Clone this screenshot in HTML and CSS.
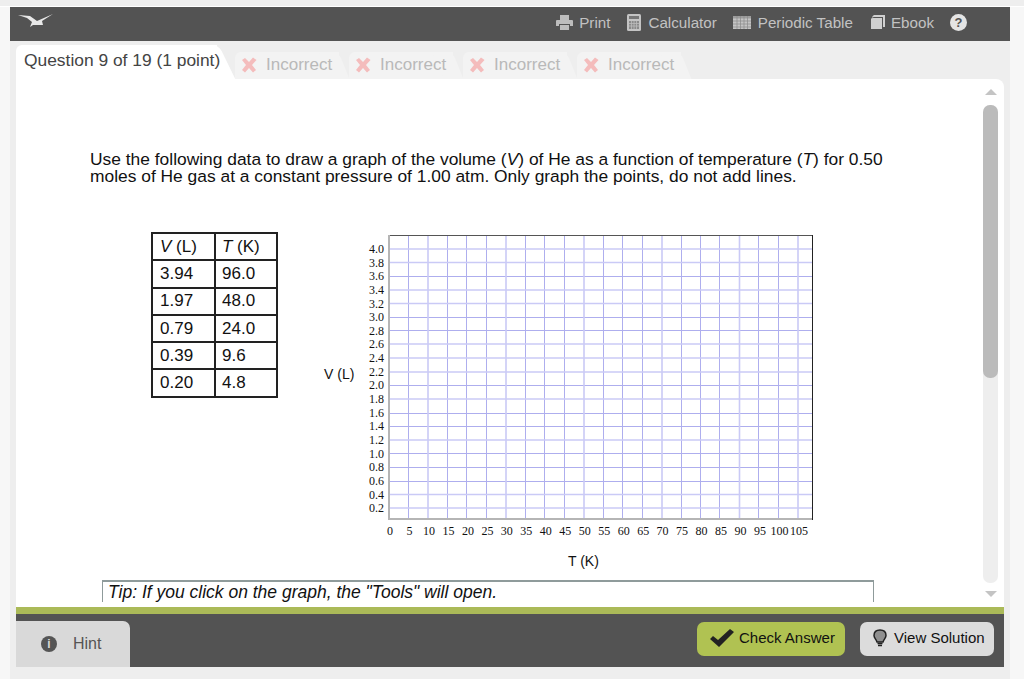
FILE: index.html
```html
<!DOCTYPE html>
<html lang="en">
  <head>
    <meta charset="UTF-8" />
    <title>Question 9 of 19</title>
    <link rel="stylesheet" href="styles.css">
  </head>
  <body>
    <div class="strip"></div>
    <div class="shell">
      <div class="topbar">
        <svg class="logo" width="36" height="14" viewBox="0 0 36 14">
          <path d="M0 1 L12 2 L19 7 L35 0 L24 7 L25 11 L15 11 L12 13 L14 8 L9 4 Z" fill="#e8e8e8"/>
        </svg>
        <div class="tools">
          <div class="tool print">
            <svg width="17" height="15" viewBox="0 0 17 15">
              <path d="M4 0 H13 V5 H4 Z M1 5 H16 Q17 5 17 6 V11 H14 V9 H3 V11 H0 V6 Q0 5 1 5 Z M4 10 H13 V15 H4 Z" fill="#bdbdbd"/>
            </svg>
            <span>Print</span>
          </div>
          <div class="tool calc">
            <svg width="14" height="17" viewBox="0 0 14 17">
              <rect width="14" height="17" rx="1.500" fill="#c4c4c4"/>
              <rect x="2" y="2" width="10" height="3" fill="#777"/>
              <path d="M2 7 H12 V15 H2 Z" fill="#8a8a8a"/>
              <path d="M4.500 7 V15 M7 7 V15 M9.500 7 V15 M2 9.500 H12 M2 12 H12" stroke="#bbb" stroke-width="0.800"/>
            </svg>
            <span>Calculator</span>
          </div>
          <div class="tool periodic">
            <svg width="18" height="13" viewBox="0 0 18 13">
              <rect width="18" height="13" fill="#c4c4c4"/>
              <rect y="0" width="18" height="2.500" fill="#9d9d9d"/>
              <path d="M4 0 V13 M7.500 0 V13 M11 0 V13 M14.500 0 V13 M0 5 H18 M0 8 H18 M0 11 H18" stroke="#8a8a8a" stroke-width="0.700"/>
            </svg>
            <span>Periodic Table</span>
          </div>
          <div class="tool ebook">
            <svg width="14" height="14" viewBox="0 0 14 14">
              <path d="M3 0 H14 V12 H12 V2 H3 Q2 2 1 3 Q1 1 3 0 Z M0 4 Q0 3 2 3 H11 V14 H0 Z" fill="#d0d0d0"/>
            </svg>
            <span>Ebook</span>
          </div>
          <div class="help">?</div>
        </div>
      </div>

      <div class="tabs">
        <div class="tab active">Question 9 of 19 (1 point)</div>
        <div class="tab wrong">
          <svg class="cross" width="16" height="16" viewBox="0 0 16 16"><path d="M1 3 L4 1 L8 5 L12 .5 L15.500 3 L11 8 L15 13 L12 15.500 L8 11 L4 15.500 L1 13 L5 8 Z" fill="#f4bcbc"/></svg>
          Incorrect
        </div>
        <div class="tab wrong">
          <svg class="cross" width="16" height="16" viewBox="0 0 16 16"><path d="M1 3 L4 1 L8 5 L12 .5 L15.500 3 L11 8 L15 13 L12 15.500 L8 11 L4 15.500 L1 13 L5 8 Z" fill="#f4bcbc"/></svg>
          Incorrect
        </div>
        <div class="tab wrong">
          <svg class="cross" width="16" height="16" viewBox="0 0 16 16"><path d="M1 3 L4 1 L8 5 L12 .5 L15.500 3 L11 8 L15 13 L12 15.500 L8 11 L4 15.500 L1 13 L5 8 Z" fill="#f4bcbc"/></svg>
          Incorrect
        </div>
        <div class="tab wrong">
          <svg class="cross" width="16" height="16" viewBox="0 0 16 16"><path d="M1 3 L4 1 L8 5 L12 .5 L15.500 3 L11 8 L15 13 L12 15.500 L8 11 L4 15.500 L1 13 L5 8 Z" fill="#f4bcbc"/></svg>
          Incorrect
        </div>
      </div>

      <div class="main">
        <div class="content">
          <p class="question">
            Use the following data to draw a graph of the volume (<i>V</i>) of He as a function of temperature (<i>T</i>) for 0.50
            moles of He gas at a constant pressure of 1.00 atm. Only graph the points, do not add lines.
          </p>
          <div class="work">
            <table class="data">
              <tr><th><i>V</i> (L)</th><th><i>T</i> (K)</th></tr>
              <tr><td>3.94</td><td>96.0</td></tr>
              <tr><td>1.97</td><td>48.0</td></tr>
              <tr><td>0.79</td><td>24.0</td></tr>
              <tr><td>0.39</td><td>9.6</td></tr>
              <tr><td>0.20</td><td>4.8</td></tr>
            </table>
            <div class="graph">
              <div class="yname">V (L)</div>
              <div class="yaxis">
                <span>4.0</span><span>3.8</span><span>3.6</span><span>3.4</span><span>3.2</span>
                <span>3.0</span><span>2.8</span><span>2.6</span><span>2.4</span><span>2.2</span>
                <span>2.0</span><span>1.8</span><span>1.6</span><span>1.4</span><span>1.2</span>
                <span>1.0</span><span>0.8</span><span>0.6</span><span>0.4</span><span>0.2</span>
              </div>
              <div class="plotcol">
                <svg class="plot" width="425" height="285" viewBox="0 0 425 285">
                  <path class="thin" d="M20.500 0V284M59.500 0V284M78.500 0V284M98.500 0V284M137.500 0V284M156.500 0V284M176.500 0V284M215.500 0V284M234.500 0V284M254.500 0V284M293.500 0V284M312.500 0V284M331.500 0V284M370.500 0V284M390.500 0V284" />
                  <path class="thin" d="M1 41.500H424M1 82.500H424M1 95.500H424M1 150.500H424M1 178.500H424M1 191.500H424M1 218.500H424M1 232.500H424M1 246.500H424" />
                  <path class="thick" d="M40 0V284M118 0V284M196 0V284M274 0V284M351.500 0V284M410 0V284" />
                  <path class="thick" d="M1 14H424M1 27.500H424M1 55H424M1 68.500H424M1 109H424M1 123H424M1 137H424M1 164H424M1 205H424M1 259.500H424M1 273H424" />
                  <path d="M0 .5H425" stroke="#555" />
                  <path d="M1 0V285M0 284H425" stroke="#b5b5b5" stroke-width="2" />
                  <path d="M424.500 0V285" stroke="#222" />
                </svg>
                <div class="xaxis">
                  <span>0</span><span>5</span><span>10</span><span>15</span><span>20</span><span>25</span>
                  <span>30</span><span>35</span><span>40</span><span>45</span><span>50</span><span>55</span>
                  <span>60</span><span>65</span><span>70</span><span>75</span><span>80</span><span>85</span>
                  <span>90</span><span>95</span><span>100</span><span>105</span>
                </div>
                <div class="xname">T (K)</div>
              </div>
            </div>
          </div>
          <div class="tip">Tip: If you click on the graph, the "Tools" will open.</div>
        </div>
        <div class="scrollbar">
          <div class="arrow up"></div>
          <div class="track"><div class="thumb"></div></div>
          <div class="arrow down"></div>
        </div>
      </div>

      <div class="footer">
        <div class="hint">
          <div class="info">i</div>
          <span>Hint</span>
        </div>
        <div class="actions">
          <div class="btn check">
            <svg width="24" height="18" viewBox="0 0 24 18"><path d="M0 10 L3 7 L8 11 L20 0 L24 3 L9 18 Z" fill="#222"/></svg>
            Check Answer
          </div>
          <div class="btn solution">
            <svg width="14" height="18" viewBox="0 0 14 18">
              <path d="M7 1 C3 1 1 3.500 1 6.500 C1 9 3 10 4 13 H10 C11 10 13 9 13 6.500 C13 3.500 11 1 7 1 Z" fill="#8f8f8f" stroke="#222" stroke-width="1.500"/>
              <path d="M4.500 14.500 H9.500 M5 16.500 H9" stroke="#222" stroke-width="1.500"/>
            </svg>
            View Solution
          </div>
        </div>
      </div>
    </div>
  </body>
</html>
```

FILE: styles.css
```css
body {
  margin: 0;
  height: 679px;
  overflow: hidden;
  background-color: #f7f7f7;
  font-family: "Liberation Sans", Arial, sans-serif;
}
.strip {
  height: 6px;
  background-color: #eeeeee;
  border-bottom: 1px solid #ffffff;
}
.shell {
  margin-left: 10px;
  width: 1000px;
  height: 672px;
  background-color: #eeeeee;
}

/* Top bar */
.topbar {
  height: 34px;
  background-color: #535353;
  display: flex;
  justify-content: space-between;
  align-items: flex-start;
}
.logo {
  margin: 7px 0 0 8px;
}
.tools {
  display: flex;
  align-items: center;
  height: 30px;
  padding-right: 43px;
  color: #c2c2c2;
  font-size: 15.200px;
}
.tool {
  display: flex;
  align-items: center;
}
.print { gap: 6px; margin-right: 17px; }
.calc { gap: 7px; margin-right: 16px; }
.periodic { gap: 7px; margin-right: 18px; }
.ebook { gap: 6px; margin-right: 16px; }
.help {
  width: 17px;
  height: 17px;
  border-radius: 50%;
  background-color: #e4e4e4;
  color: #535353;
  font-size: 13px;
  font-weight: bold;
  line-height: 17px;
  text-align: center;
}

/* Tabs */
.tabs {
  height: 38px;
  padding-left: 6px;
  display: flex;
  align-items: flex-end;
}
.tab {
  position: relative;
  z-index: 1;
}
.tab::after {
  content: "";
  position: absolute;
  top: 0;
  bottom: 0;
  width: 20px;
  border-top-right-radius: 6px;
  background-color: inherit;
  z-index: -1;
}
.active {
  width: 201px;
  height: 34px;
  padding: 5px 0 0 8px;
  box-sizing: border-box;
  background-color: #ffffff;
  color: #444444;
  font-size: 17.400px;
  white-space: nowrap;
  border-top-left-radius: 6px;
  margin-right: 18px;
}
.active::after {
  right: -9.500px;
  transform: skewX(26deg);
}
.wrong {
  width: 104px;
  height: 27px;
  margin-right: 10px;
  padding: 0 0 2px 6px;
  box-sizing: border-box;
  display: flex;
  align-items: center;
  gap: 9px;
  background-color: #f3f3f3;
  color: #b9b9b9;
  font-size: 17px;
  border-top-left-radius: 6px;
}
.wrong::after {
  right: -4.500px;
  transform: skewX(22deg);
}

/* Question area */
.main {
  margin: 0 6px;
  height: 528px;
  background-color: #ffffff;
  border-top-right-radius: 8px;
  display: flex;
  overflow: hidden;
}
.content {
  flex: 1;
  padding: 72px 0 0 74px;
  overflow: hidden;
  color: #111111;
}
.question {
  margin: 0;
  width: 810px;
  font-size: 17.400px;
  line-height: 17px;
}
.work {
  display: flex;
  align-items: flex-start;
  margin: 47px 0 0 61px;
}
.data {
  border-collapse: collapse;
  font-size: 17px;
  width: 127px;
}
.data th,
.data td {
  border: 2px solid #222222;
  height: 25.300px;
  padding: 0 0 0 6px;
  text-align: left;
  font-weight: normal;
}
.data th:first-child,
.data td:first-child {
  width: 54px;
  padding-left: 7px;
}
.graph {
  display: flex;
  margin: 3px 0 0 46px;
}
.yname {
  width: 45px;
  height: 278px;
  display: flex;
  align-items: center;
  font-size: 14px;
}
.yaxis {
  width: 19px;
  padding-top: 8px;
  display: flex;
  flex-direction: column;
  font-family: "Liberation Serif", "Times New Roman", serif;
  font-size: 12px;
}
.yaxis span {
  height: 13.650px;
  line-height: 13.650px;
}
.plot {
  display: block;
}
.thin,
.thick {
  fill: none;
}
.thin {
  stroke: #aeaeee;
}
.thick {
  stroke: #cacaf6;
  stroke-width: 1.600;
}
.xaxis {
  display: flex;
  margin: 4px 0 0 -7.700px;
  font-family: "Liberation Serif", "Times New Roman", serif;
  font-size: 12px;
  line-height: 14px;
}
.xaxis span {
  width: 19.470px;
  flex: none;
  text-align: center;
}
.xname {
  margin: 16px 0 0 180px;
  font-size: 14px;
  line-height: 14px;
}
.tip {
  margin: 12px 0 0 12px;
  width: 765px;
  height: 20px;
  border: 1px solid #8f9b9b;
  border-top-width: 2px;
  border-bottom: none;
  padding-left: 5px;
  font-size: 17.500px;
  font-style: italic;
  line-height: 20px;
  white-space: nowrap;
}

/* Scrollbar */
.scrollbar {
  width: 15px;
  margin-right: 6px;
  display: flex;
  flex-direction: column;
  align-items: center;
  padding-top: 10px;
  box-sizing: border-box;
}
.arrow {
  width: 0;
  height: 0;
  border-left: 6px solid transparent;
  border-right: 6px solid transparent;
}
.up {
  border-bottom: 6px solid #c4c4c4;
  margin-bottom: 10px;
}
.down {
  border-top: 6px solid #c4c4c4;
  margin-top: 8px;
}
.track {
  width: 15px;
  height: 478px;
  border-radius: 7px;
  background-color: #eeeeee;
}
.thumb {
  height: 273px;
  border-radius: 7px;
  background-color: #bbbbbb;
}

/* Footer */
.footer {
  margin: 0 6px;
  height: 53px;
  border-top: 7px solid #abba58;
  background-color: #535353;
  display: flex;
  justify-content: space-between;
}
.hint {
  align-self: flex-end;
  width: 114px;
  height: 46px;
  box-sizing: border-box;
  padding-left: 25px;
  display: flex;
  align-items: center;
  gap: 16px;
  background-color: #d9d9d9;
  border-top-right-radius: 7px;
  color: #555555;
  font-size: 16px;
}
.info {
  width: 16px;
  height: 16px;
  border-radius: 50%;
  background-color: #555555;
  color: #d9d9d9;
  font-size: 12px;
  font-weight: bold;
  line-height: 16px;
  text-align: center;
}
.actions {
  display: flex;
  gap: 15px;
  padding: 8px 10px 0 0;
  align-items: flex-start;
}
.btn {
  height: 34px;
  padding-bottom: 3px;
  box-sizing: border-box;
  display: flex;
  align-items: center;
  border-radius: 7px;
  font-size: 15px;
  color: #111111;
}
.check {
  width: 148px;
  padding-left: 13px;
  gap: 5px;
  background-color: #b0c252;
}
.solution {
  width: 134px;
  padding-left: 13px;
  gap: 7px;
  background-color: #dcdcdc;
}
```
